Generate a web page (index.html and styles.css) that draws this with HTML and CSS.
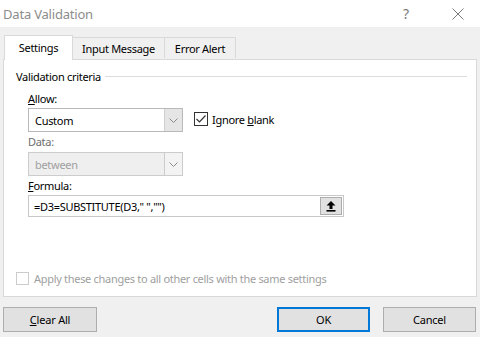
FILE: index.html
```html
<!DOCTYPE html>
<html>
<head>
<meta charset="utf-8">
<link rel="stylesheet" href="styles.css">
</head>
<body>
<div class="dialog">
  <div class="titlebar">
    <span class="title">Data Validation</span>
    <span class="help">?</span>
    <span class="close"><svg width="12" height="12" viewBox="0 0 12 12"><path d="M0.5 0.5L11.5 11.5M11.5 0.5L0.5 11.5" stroke="#7a7a7a" stroke-width="1" fill="none"/></svg></span>
  </div>
  <div class="tabs">
    <div class="tab active">Settings</div>
    <div class="tab">Input Message</div>
    <div class="tab">Error Alert</div>
  </div>
  <div class="panel">
    <div class="group-head"><span class="group-title">Validation criteria</span><span class="group-line"></span></div>
    <div class="criteria">
      <div class="label"><u>A</u>llow:</div>
      <div class="row">
        <div class="combo">
          <span class="combo-text">Custom</span>
          <span class="combo-btn"><svg width="9" height="5" viewBox="0 0 9 5"><path d="M0.5 0.5L4.5 4.5L8.5 0.5" stroke="#8a8a8a" fill="none"/></svg></span>
        </div>
        <label class="check ignore">
          <span class="box checked"><svg width="12" height="12" viewBox="0 0 12 12"><path d="M1.5 6L4.5 9L10.5 2.5" stroke="#333" stroke-width="1.2" fill="none"/></svg></span>
          <span>Ignore <u>b</u>lank</span>
        </label>
      </div>
      <div class="label dim">Data:</div>
      <div class="combo disabled">
        <span class="combo-text">between</span>
        <span class="combo-btn"><svg width="9" height="5" viewBox="0 0 9 5"><path d="M0.5 0.5L4.5 4.5L8.5 0.5" stroke="#8a8a8a" fill="none"/></svg></span>
      </div>
      <div class="label formula-label"><u>F</u>ormula:</div>
      <div class="formula">
        <span class="formula-text">=D3=SUBSTITUTE(D3," ","")</span>
        <span class="ref-btn"><svg width="10" height="11" viewBox="0 0 10 11"><path d="M5 0L9.5 4.5H6.5V8H3.5V4.5H0.5Z" fill="#000"/><rect x="0.5" y="9" width="9" height="1.6" fill="#000"/></svg></span>
      </div>
    </div>
    <label class="check apply">
      <span class="box disabled-box"></span>
      <span>Apply these changes to all other cells with the same settings</span>
    </label>
  </div>
  <div class="buttons">
    <button class="btn clear"><u>C</u>lear All</button>
    <span class="spacer"></span>
    <button class="btn ok">OK</button>
    <button class="btn cancel">Cancel</button>
  </div>
</div>
</body>
</html>
```
FILE: styles.css
```css
* { box-sizing: border-box; }
html, body { margin: 0; padding: 0; }
body {
  width: 480px;
  height: 337px;
  overflow: hidden;
  background: #f0f0f0;
  font-family: "Noto Sans", "Open Sans", sans-serif;
  font-size: 11px;
  letter-spacing: -0.3px;
  color: #000;
}
.dialog { width: 480px; height: 337px; }
.titlebar {
  height: 27px;
  background: #fff;
  display: flex;
  align-items: center;
  padding-left: 3px;
}
.title {
  font-size: 13px;
  letter-spacing: -0.2px;
  color: #8c8c8c;
  flex: 1;
}
.help {
  font-size: 14px;
  color: #7a7a7a;
  width: 12px;
  margin-right: 37px;
}
.close { width: 12px; margin-right: 16px; display: flex; }
.tabs {
  display: flex;
  align-items: flex-end;
  padding-left: 4px;
  margin-top: 8px;
  height: 24px;
  position: relative;
  z-index: 2;
}
.tab {
  height: 21px;
  border: 1px solid #d9d9d9;
  border-bottom: none;
  background: #f0f0f0;
  display: flex;
  align-items: center;
  justify-content: center;
  margin-bottom: 1px;
}
.tab + .tab { border-left: none; }
.tab.active {
  width: 69px;
  height: 25px;
  margin-bottom: -1px;
  background: #fff;
  border-color: #d9d9d9;
  padding-bottom: 2px;
}
.tab:nth-child(2) { width: 92px; }
.tab:nth-child(3) { width: 71px; }
.panel {
  margin-left: 3px;
  width: 474px;
  height: 238px;
  background: #fff;
  border: 1px solid #d9d9d9;
  padding: 0 0 0 12px;
  display: flex;
  flex-direction: column;
}
.group-head {
  display: flex;
  align-items: center;
  height: 16px;
  margin-top: 8px;
  padding-right: 9px;
}
.group-title { margin-right: 4px; }
.group-line { flex: 1; height: 1px; background: #dcdcdc; }
.criteria { padding-left: 12px; margin-top: 7px; }
.label { height: 16px; line-height: 16px; }
.label.dim { color: #6d6d6d; margin-top: 2px; }
.formula-label { margin-top: 2px; }
u { text-decoration: underline; text-underline-offset: 1px; }
.row { display: flex; align-items: center; margin-top: 1px; }
.combo {
  width: 155px;
  height: 24px;
  border: 1px solid #b9b9b9;
  background: #fff;
  display: flex;
  align-items: stretch;
}
.combo-text { flex: 1; padding-left: 6px; display: flex; align-items: center; }
.combo-btn {
  width: 18px;
  background: #e5e5e5;
  border-left: 1px solid #cfcfcf;
  display: flex;
  align-items: center;
  justify-content: center;
}
.combo.disabled {
  background: #efefef;
  border-color: #cccccc;
  color: #a0a0a0;
  margin-top: 2px;
}
.combo.disabled .combo-btn { background: #f3f3f3; border-left-color: #cccccc; }
.check { display: flex; align-items: center; }
.ignore { margin-left: 11px; margin-top: -2px; }
.box {
  width: 14px;
  height: 14px;
  border: 1px solid #333;
  background: #fff;
  margin-right: 4px;
  display: flex;
  align-items: center;
  justify-content: center;
}
.formula {
  width: 316px;
  height: 22px;
  margin-top: 1px;
  border: 1px solid #c8c8c8;
  background: #fff;
  display: flex;
  align-items: stretch;
  padding: 1px;
}
.formula-text { flex: 1; padding-left: 4px; display: flex; align-items: center; }
.ref-btn {
  width: 22px;
  background: #e1e1e1;
  border: 1px solid #adadad;
  display: flex;
  align-items: center;
  justify-content: center;
}
.apply { margin-top: 54px; color: #a0a0a0; }
.apply .box.disabled-box {
  width: 13px;
  height: 13px;
  border-color: #cccccc;
  margin-right: 5px;
}
.buttons {
  display: flex;
  padding: 10px 4px 0 3px;
  gap: 0;
}
.spacer { flex: 1; }
.btn {
  font-family: inherit;
  font-size: 11px;
  letter-spacing: -0.2px;
  height: 25px;
  background: #e1e1e1;
  border: 1px solid #adadad;
  color: #000;
  padding: 0;
}
.clear { width: 94px; }
.ok {
  width: 93px;
  border: 1px solid #0078d7;
  box-shadow: inset 0 0 0 1px #0078d7;
  margin-right: 13px;
}
.cancel { width: 93px; }
```
